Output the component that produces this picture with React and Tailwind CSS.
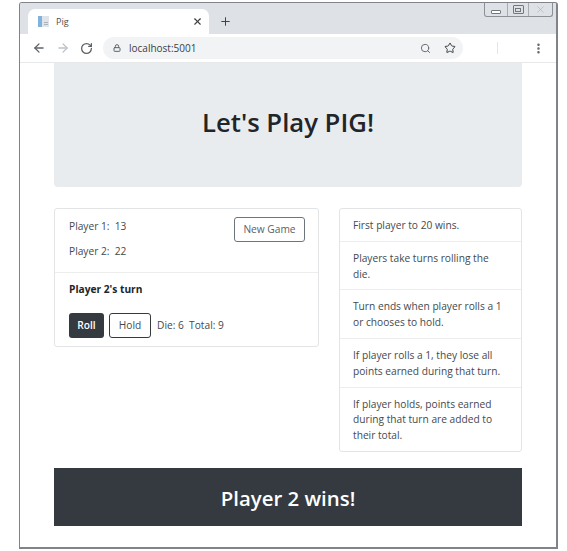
import { ArrowLeft, ArrowRight, RotateCw, Lock, Search, Star, X, Plus, EllipsisVertical } from "lucide-react";

const rules = [
  "First player to 20 wins.",
  "Players take turns rolling the die.",
  "Turn ends when player rolls a 1 or chooses to hold.",
  "If player rolls a 1, they lose all points earned during that turn.",
  "If player holds, points earned during that turn are added to their total.",
];

function WindowControls() {
  return (
    <div className="absolute top-0 right-[3px] flex h-[14px] w-[69px] rounded-b-[3px] border border-t-0 border-[#8d9196] text-[#6b6f74]">
      <div className="flex w-[23px] items-end justify-center border-r border-[#a9adb2] pb-[2px]">
        <div className="h-[4px] w-[10px] rounded-[1px] border border-[#74787d] bg-white" />
      </div>
      <div className="flex w-[21px] items-center justify-center border-r border-[#a9adb2]">
        <div className="flex h-[9px] w-[11px] items-center justify-center rounded-[1px] border border-[#74787d]">
          <div className="h-[4px] w-[6px] border border-[#74787d]" />
        </div>
      </div>
      <div className="flex flex-1 items-center justify-center">
        <X size={11} strokeWidth={1.5} className="text-[#b0b3b7]" />
      </div>
    </div>
  );
}

function BrowserChrome() {
  return (
    <div>
      <div className="relative flex h-[31px] items-end bg-[#dee1e6] pl-[8px]">
        <div className="flex h-[25px] w-[181px] items-center rounded-t-[7px] bg-white pl-[10px] pr-[6px]">
          <svg width="12" height="13" viewBox="0 0 12 13" className="shrink-0">
            <rect x="0" y="1" width="4" height="11" fill="#7fb2dd" />
            <rect x="4" y="1" width="7" height="11" fill="#dfe4ea" />
            <rect x="6" y="7" width="4" height="1" fill="#aab2bb" />
            <rect x="6" y="9" width="4" height="1" fill="#aab2bb" />
          </svg>
          <span className="ml-[6px] text-[9px] leading-none text-[#4a4d51]">Pig</span>
          <X size={11} strokeWidth={2.4} className="ml-auto text-[#3c4043]" />
        </div>
        <Plus size={13} strokeWidth={1.8} className="mb-[6px] ml-[10px] text-[#3c4043]" />
        <WindowControls />
      </div>
      <div className="flex h-[28px] items-center bg-white pl-[12px] pr-[11px]">
        <ArrowLeft size={14} strokeWidth={2.2} className="text-[#5f6368]" />
        <ArrowRight size={14} strokeWidth={2.2} className="ml-[10px] text-[#bdc1c6]" />
        <RotateCw size={13} strokeWidth={2.4} className="ml-[10px] text-[#5f6368]" />
        <div className="ml-[10px] flex h-[22px] w-[360px] items-center rounded-full bg-[#f1f3f4] pl-[10px] pr-[7px]">
          <Lock size={8} strokeWidth={3} className="text-[#5f6368]" />
          <span className="ml-[8px] text-[10px] leading-none text-[#3c4043]">localhost:5001</span>
          <Search size={11} strokeWidth={2} className="ml-auto text-[#5f6368]" />
          <Star size={12} strokeWidth={2} className="ml-[13px] text-[#3c4043]" />
        </div>
        <div className="ml-[34px] h-[12px] w-px bg-[#e3e5e8]" />
        <EllipsisVertical size={13} strokeWidth={2.6} className="ml-auto text-[#5f6368]" />
      </div>
    </div>
  );
}

export default function App() {
  return (
    <div className="h-[551px] w-[567px] overflow-hidden bg-white pl-[19px] pr-[9px] pt-[2px] font-['Open_Sans',sans-serif] text-[#212529]">
      <div className="h-[547px] w-[539px] overflow-hidden rounded-t-[3px] border border-b-2 border-r-2 border-[#80848a]">
        <BrowserChrome />

        <div className="border-t border-[#e6e8ea] px-[34px]">
          <div className="flex h-[124px] items-center justify-center rounded-b-[4px] bg-[#e9ecef] pb-[4px]">
            <h1 className="text-[25.7px] font-semibold leading-none">Let's Play PIG!</h1>
          </div>

          <div className="mt-[21px] flex items-start gap-[20px] text-[10.2px] leading-[15.8px] text-[#44494e]">
            <div className="w-[265px] rounded-[3px] border border-[#e3e4e6]">
              <div className="flex items-start justify-between border-b border-[#eceded] pb-[12px] pl-[14px] pr-[13px] pt-[10px]">
                <div>
                  <p>Player 1:&nbsp; 13</p>
                  <p className="mt-[9px]">Player 2:&nbsp; 22</p>
                </div>
                <button className="-mt-[2px] h-[25px] w-[71px] rounded-[3px] border border-[#6c757d] pt-[1px] text-[#5a6067]">
                  New Game
                </button>
              </div>
              <div className="pb-[8px] pl-[14px] pt-[9px]">
                <p className="font-bold text-[#212529]">Player 2's turn</p>
                <div className="mt-[16px] flex items-center">
                  <button className="h-[25px] w-[35px] rounded-[3px] bg-[#343a40] pt-[1px] font-semibold text-white">Roll</button>
                  <button className="ml-[5px] h-[25px] w-[42px] rounded-[3px] border border-[#343a40] pt-[1px] text-[#44494e]">Hold</button>
                  <span className="ml-[6px] pt-[1px]">Die: 6&nbsp; Total: 9</span>
                </div>
              </div>
            </div>

            <ul className="w-[183px] rounded-[3px] border border-[#e3e4e6]">
              {rules.map((rule) => (
                <li key={rule} className="border-b border-[#eceded] px-[13px] pb-[7px] pt-[9px] last:border-b-0">
                  {rule}
                </li>
              ))}
            </ul>
          </div>

          <div className="mt-[16px] flex h-[58px] items-center justify-center bg-[#343a40] pt-[2px]">
            <h2 className="text-[20.4px] font-semibold leading-none text-white">Player 2 wins!</h2>
          </div>
        </div>
      </div>
    </div>
  );
}
